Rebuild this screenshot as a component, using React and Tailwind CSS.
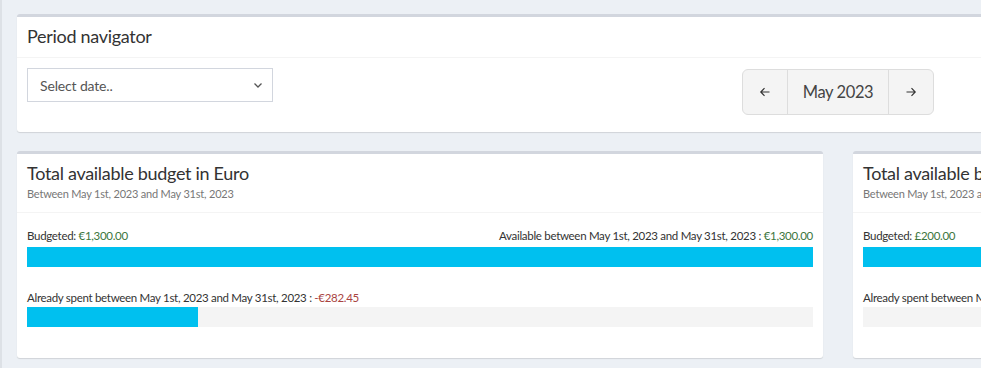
import React from "react";

const font = { fontFamily: '"Lato", "Open Sans", sans-serif' };

function ArrowLeft() {
  return (
    <svg width="12" height="12" viewBox="0 0 12 12" fill="none" stroke="#333" strokeWidth="1.2">
      <path d="M10.5 6H1.8M5.5 2.2L1.8 6l3.7 3.8" />
    </svg>
  );
}
function ArrowRight() {
  return (
    <svg width="12" height="12" viewBox="0 0 12 12" fill="none" stroke="#333" strokeWidth="1.2">
      <path d="M1.5 6h8.7M6.5 2.2L10.2 6 6.5 9.8" />
    </svg>
  );
}

function BudgetCard({ title, budgeted, available, spent, pct }) {
  return (
    <div className="w-[806px] shrink-0 bg-white rounded-[3px] border-t-[3px] border-[#d2d6de] shadow-[0_1px_1px_rgba(0,0,0,0.12)]">
      <div className="px-[10px] pt-[6px] pb-[11px] border-b border-[#f4f4f4]">
        <div className="text-[18px] leading-[26px] tracking-[-0.3px] text-[#333]">{title}</div>
        <div className="mt-[1px] text-[11px] leading-[14px] tracking-[-0.2px] text-[#777]">
          Between May 1st, 2023 and May 31st, 2023
        </div>
      </div>
      <div className="px-[10px] pt-[15px] pb-[31px] text-[11.5px] tracking-[-0.3px] text-[#333]">
        <div className="flex justify-between leading-[15px]">
          <span>
            Budgeted: <span className="text-[#3c763d]">{budgeted}</span>
          </span>
          {available && (
            <span>
              Available between May 1st, 2023 and May 31st, 2023 : <span className="text-[#3c763d]">{available}</span>
            </span>
          )}
        </div>
        <div className="mt-[4px] h-[20px] bg-[#00c0ef]"></div>
        <div className="mt-[23px] leading-[15px]">
          Already spent between May 1st, 2023 and May 31st, 2023 : <span className="text-[#a94442]">{spent}</span>
        </div>
        <div className="mt-[2px] h-[20px] bg-[#f4f4f4]">
          <div className="h-full bg-[#00c0ef]" style={{ width: pct + "%" }}></div>
        </div>
      </div>
    </div>
  );
}

export default function App() {
  return (
    <div className="w-[981px] h-[368px] overflow-hidden bg-[#ecf0f5] border-l-2 border-[#dde1e6]" style={font}>
      <div className="w-[1700px] pl-[15px] pt-[14px]">
        <div className="w-[1642px] bg-white rounded-[3px] border-t-[3px] border-[#d2d6de] shadow-[0_1px_1px_rgba(0,0,0,0.12)]">
          <div className="px-[10px] h-[41px] pb-[2px] flex items-center border-b border-[#f4f4f4]">
            <span className="text-[18px] tracking-[-0.3px] text-[#333]">Period navigator</span>
          </div>
          <div className="px-[10px] pt-[10px] pb-[17px] flex items-start">
            <div className="w-[246px] h-[34px] border border-[#d2d6de] flex items-center justify-between pl-[12px] pr-[9px] text-[14px] tracking-[-0.15px] text-[#555]">
              <span>Select date..</span>
              <svg width="10" height="10" viewBox="0 0 10 10" fill="none" stroke="#555" strokeWidth="1.3">
                <path d="M1.5 3.5L5 7l3.5-3.5" />
              </svg>
            </div>
            <div className="ml-[469px] mt-[1px] flex h-[46px] border border-[#ddd] rounded-[6px] bg-[#f4f4f4] overflow-hidden">
              <div className="w-[45px] flex items-center justify-center border-r border-[#ddd]">
                <ArrowLeft />
              </div>
              <div className="w-[101px] flex items-center justify-center border-r border-[#ddd] text-[16.5px] tracking-[-0.4px] text-[#444]">
                May 2023
              </div>
              <div className="w-[44px] flex items-center justify-center">
                <ArrowRight />
              </div>
            </div>
          </div>
        </div>
        <div className="mt-[19px] flex gap-[30px]">
          <BudgetCard
            title="Total available budget in Euro"
            budgeted="€1,300.00"
            available="€1,300.00"
            spent="-€282.45"
            pct={21.7}
          />
          <BudgetCard
            title="Total available budget in British Pound"
            budgeted="£200.00"
            available="£200.00"
            spent="£0.00"
            pct={0}
          />
        </div>
      </div>
    </div>
  );
}
